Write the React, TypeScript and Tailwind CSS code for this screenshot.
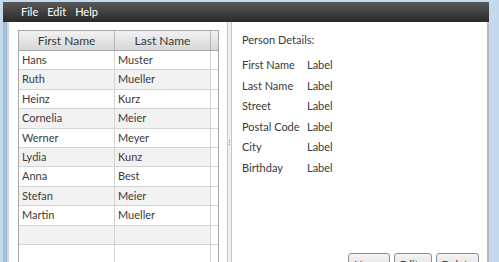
import React from "react";

const people: [string, string][] = [
  ["Hans", "Muster"],
  ["Ruth", "Mueller"],
  ["Heinz", "Kurz"],
  ["Cornelia", "Meier"],
  ["Werner", "Meyer"],
  ["Lydia", "Kunz"],
  ["Anna", "Best"],
  ["Stefan", "Meier"],
  ["Martin", "Mueller"],
  ["", ""],
  ["", ""],
];

const details = ["First Name", "Last Name", "Street", "Postal Code", "City", "Birthday"];

const buttons: [string, string][] = [
  ["New...", "w-[42px]"],
  ["Edit...", "w-[38px]"],
  ["Delete", "w-[43px]"],
];

export default function App() {
  return (
    <div
      className="w-[499px] h-[262px] overflow-hidden bg-[#c4d8ee] pt-[2px] pl-[3px] pr-[10px] text-[11px] text-[#3a3a3a]"
      style={{ fontFamily: 'Lato, "Open Sans", sans-serif' }}
    >
      <div className="flex flex-col h-full">
        <div className="h-[20px] shrink-0 bg-gradient-to-b from-[#5a5a5a] to-[#2a2a2a] flex items-center gap-[9px] pl-[18px] text-white text-[11px]">
          <span>File</span>
          <span>Edit</span>
          <span>Help</span>
        </div>
        <div className="flex flex-1 min-h-0">
          <div className="w-[4px] bg-[#a3bfe0]" />
          <div className="w-[2px] bg-[#d4d4d4]" />
          <div className="w-[218px] bg-white pl-[9px] pt-[8px]">
            <div className="w-[201px] border border-[#a9a9a9] border-b-0">
              <div className="flex h-[20px] bg-gradient-to-b from-[#f2f2f2] to-[#d6d6d6] border-b border-[#a9a9a9] text-[12px]">
                <div className="w-[96px] border-r border-[#b5b5b5] flex items-center justify-center">First Name</div>
                <div className="w-[96px] border-r border-[#b5b5b5] flex items-center justify-center">Last Name</div>
                <div className="flex-1" />
              </div>
              {people.map(([f, l], i) => (
                <div
                  key={i}
                  className={`flex h-[19.4px] border-b border-[#d4d4d4] ${i % 2 === 1 ? "bg-[#f2f2f2]" : "bg-white"}`}
                >
                  <div className="w-[96px] border-r border-[#d4d4d4] flex items-center pl-[3px]">{f}</div>
                  <div className="w-[96px] border-r border-[#d4d4d4] flex items-center pl-[3px]">{l}</div>
                  <div className="flex-1 bg-white" />
                </div>
              ))}
            </div>
          </div>
          <div className="w-[5px] bg-[#f0f0f0] border-l border-r border-[#c8c8c8] flex flex-col items-center justify-center gap-[1px]">
            <div className="w-[1px] h-[1px] bg-[#888]" />
            <div className="w-[1px] h-[1px] bg-[#888]" />
            <div className="w-[1px] h-[1px] bg-[#888]" />
          </div>
          <div className="flex-1 bg-white border-r-2 border-[#b8b8b8] flex flex-col pl-[10px] pt-[8px]">
            <div className="h-[20px] flex items-center">Person Details:</div>
            <div className="mt-[5px] flex flex-col">
              {details.map((d) => (
                <div key={d} className="h-[20.6px] flex items-center">
                  <span className="w-[65px]">{d}</span>
                  <span>Label</span>
                </div>
              ))}
            </div>
            <div className="flex-1" />
            <div className="flex gap-[4px] justify-end pr-[8px] mb-[-13px]">
              {buttons.map(([b, w]) => (
                <div
                  key={b}
                  className={`h-[22px] ${w} rounded-[3px] border border-[#8e8e8e] bg-gradient-to-b from-[#f4f4f4] to-[#d9d9d9] flex items-start pt-[3px] justify-center`}
                >
                  {b}
                </div>
              ))}
            </div>
          </div>
        </div>
      </div>
    </div>
  );
}
